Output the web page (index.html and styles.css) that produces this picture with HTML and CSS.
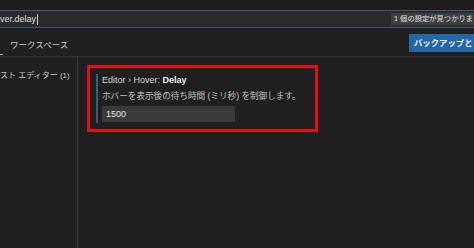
FILE: index.html
```html
<!DOCTYPE html>
<html lang="ja">
<head>
<meta charset="utf-8">
<link rel="stylesheet" href="styles.css">
</head>
<body>
<div class="page">
  <div class="topstrip"></div>
  <div class="search">
    <div class="query">ver.delay<span class="caret"></span></div>
    <div class="badge">1 個の設定が見つかりま</div>
  </div>
  <div class="tabs">
    <div class="tab-active"></div>
    <div class="tab">ワークスペース</div>
    <div class="spacer"></div>
    <div class="btn">バックアップと</div>
  </div>
  <div class="main">
    <div class="toc">
      <div class="toc-item">スト エディター (1)</div>
    </div>
    <div class="content">
      <div class="highlight">
        <div class="setting">
          <div class="setting-title">Editor › Hover: <b>Delay</b></div>
          <div class="setting-desc">ホバーを表示後の待ち時間 (ミリ秒) を制御します。</div>
          <div class="setting-input">1500</div>
        </div>
      </div>
    </div>
  </div>
</div>
</body>
</html>
```

FILE: styles.css
```css
html, body {
  margin: 0;
  padding: 0;
  background: #1f1f1f;
}
.page {
  width: 474px;
  height: 248px;
  overflow: hidden;
  display: flex;
  flex-direction: column;
  font-family: "Liberation Sans", "Noto Sans CJK JP", sans-serif;
  color: #cccccc;
}
.topstrip {
  height: 10px;
  background: #1e1e1e;
}
.search {
  height: 16px;
  border-top: 1px solid #3a5a7a;
  border-bottom: 1px solid #3a5a7a;
  background: #2a2a2a;
  display: flex;
  align-items: center;
  justify-content: space-between;
}
.query {
  font-size: 9px;
  color: #dcdcdc;
  display: flex;
  align-items: center;
}
.caret {
  display: inline-block;
  width: 1px;
  height: 11px;
  background: #d0d0d0;
  margin-left: 1px;
}
.badge {
  height: 12px;
  line-height: 12px;
  background: #3e3e3e;
  color: #e0e0e0;
  font-size: 7.3px;
  padding-left: 3px;
  width: 83px;
  box-sizing: border-box;
  white-space: nowrap;
}
.tabs {
  height: 28px;
  border-bottom: 1px solid #333333;
  display: flex;
  align-items: center;
  position: relative;
}
.tab-active {
  position: absolute;
  left: 0;
  bottom: 1px;
  width: 3px;
  height: 1px;
  background: #bbbbbb;
}
.tab {
  margin-left: 10px;
  margin-top: 4px;
  font-size: 8.5px;
  color: #cccccc;
}
.spacer {
  flex: 1;
}
.btn {
  width: 65px;
  height: 18px;
  margin-top: 2px;
  background: #2566a8;
  color: #f2f2f2;
  font-size: 8.4px;
  font-weight: bold;
  line-height: 18px;
  padding-left: 5px;
  white-space: nowrap;
  box-sizing: border-box;
}
.main {
  flex: 1;
  display: flex;
}
.toc {
  width: 77px;
  border-right: 1px solid #3c3c3c;
}
.toc-item {
  margin-top: 12px;
  font-size: 8px;
  color: #cccccc;
  white-space: nowrap;
}
.content {
  flex: 1;
}
.highlight {
  margin-left: 9px;
  margin-top: 8px;
  width: 225px;
  height: 61px;
  border: 3px solid #e0101a;
}
.setting {
  margin-left: 6px;
  margin-top: 6px;
  height: 49px;
  border-left: 2px solid #3b5a78;
  padding-left: 4px;
}
.setting-title {
  font-size: 9px;
  color: #d4d4d4;
  line-height: 12px;
}
.setting-title b {
  color: #f0f0f0;
}
.setting-desc {
  font-size: 8.6px;
  color: #c2c2c2;
  margin-top: 4px;
  line-height: 12px;
  white-space: nowrap;
}
.setting-input {
  margin-top: 4px;
  width: 133px;
  height: 16px;
  background: #3a3a3a;
  font-size: 9px;
  color: #e4e4e4;
  line-height: 16px;
  padding-left: 4px;
  box-sizing: border-box;
}
```
